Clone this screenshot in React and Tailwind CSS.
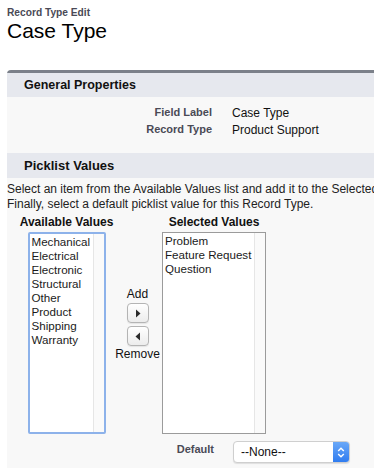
import React from 'react'

const available = ['Mechanical', 'Electrical', 'Electronic', 'Structural', 'Other', 'Product', 'Shipping', 'Warranty']
const selected = ['Problem', 'Feature Request', 'Question']

function ListBox({ items, focused, width }) {
  return (
    <div
      className={
        'relative h-[202px] bg-white ' +
        (focused ? 'border-2 border-[#8db2ea] rounded-[2px]' : 'border border-[#9b9b9b]')
      }
      style={{ width }}
    >
      <div className="absolute top-0 bottom-0 right-0 w-[11px] border-l border-[#e6e6e6] bg-[#fafafa]" />
      <div className="pl-[2px] pt-[1px] text-[11.6px] leading-[14px] text-[#1a1a1a] whitespace-nowrap">
        {items.map((it) => (
          <div key={it}>{it}</div>
        ))}
      </div>
    </div>
  )
}

function ArrowButton({ dir }) {
  return (
    <div className="w-[22px] h-[20px] rounded-[4px] border border-[#b4b4b4] bg-gradient-to-b from-white to-[#ececec] shadow-[0_1px_1px_rgba(0,0,0,0.08)] flex items-center justify-center">
      <svg width="6" height="9" viewBox="0 0 6 9">
        {dir === 'right' ? (
          <path d="M1 0.5 L5.5 4.5 L1 8.5 Z" fill="#2b2b2b" />
        ) : (
          <path d="M5 0.5 L0.5 4.5 L5 8.5 Z" fill="#2b2b2b" />
        )}
      </svg>
    </div>
  )
}

export default function App() {
  return (
    <div className="w-[374px] h-[468px] overflow-hidden bg-white" style={{ fontFamily: '"Liberation Sans", Arial, sans-serif' }}>
      {/* Title */}
      <div className="pl-[7px] pt-[7px]">
        <div className="text-[10.2px] font-bold text-[#4a4a56] leading-[12px]">Record Type Edit</div>
        <div className="text-[21px] leading-[23px] text-[#000]">Case Type</div>
      </div>

      {/* Panel */}
      <div className="ml-[7px] mt-[28px] w-[420px] border-t-[3px] border-[#7b8089] rounded-tl-[4px] bg-[#f8f8f8]">
        <div className="h-[24px] bg-[#e6e8ee] pl-[17px] flex items-center text-[12.5px] font-bold text-[#111]">
          General Properties
        </div>
        <div className="pt-[7px] pb-[13px] text-[12px]">
          <div className="flex items-center h-[17px]">
            <div className="w-[225px] pr-[20px] text-right text-[11px] font-bold text-[#4a4a56]">Field Label</div>
            <div className="text-[#111]">Case Type</div>
          </div>
          <div className="flex items-center h-[17px]">
            <div className="w-[225px] pr-[20px] text-right text-[11px] font-bold text-[#4a4a56]">Record Type</div>
            <div className="text-[#111]">Product Support</div>
          </div>
        </div>

        <div className="mt-[2px] h-[25px] bg-[#e6e8ee] pl-[17px] flex items-center text-[13px] font-bold text-[#111]">
          Picklist Values
        </div>
        <div className="pt-[4px] pb-[20px]">
          <div className="text-[12px] leading-[15px] text-[#222] whitespace-nowrap">
            <div>Select an item from the Available Values list and add it to the Selected Values list.</div>
            <div>Finally, select a default picklist value for this Record Type.</div>
          </div>

          <div className="mt-[3px] flex items-start">
            {/* Available */}
            <div className="ml-[17px] flex flex-col items-center w-[85px]">
              <div className="text-[12px] font-bold text-[#111] leading-[14px] whitespace-nowrap">Available Values</div>
              <div className="mt-[3px]">
                <ListBox items={available} focused width={78} />
              </div>
            </div>

            {/* Buttons */}
            <div className="w-[53px] pl-[4px] flex flex-col items-center pt-[72px] text-[12px] text-[#111]">
              <div className="leading-[14px]">Add</div>
              <div className="mt-[2px]"><ArrowButton dir="right" /></div>
              <div className="mt-[3px]"><ArrowButton dir="left" /></div>
              <div className="leading-[14px] mt-[1px]">Remove</div>
            </div>

            {/* Selected */}
            <div className="flex flex-col items-center w-[104px]">
              <div className="text-[12px] font-bold text-[#111] leading-[14px] whitespace-nowrap">Selected Values</div>
              <div className="mt-[3px]">
                <ListBox items={selected} width={104} />
              </div>
            </div>
          </div>

          {/* Default */}
          <div className="mt-[7px] flex items-center">
            <div className="w-[226px] text-right pr-[19px] text-[11px] font-bold text-[#4a4a56] -mt-[6px]">Default</div>
            <div className="w-[117px] h-[22px] rounded-[4px] border border-[#cfcfcf] bg-white shadow-[0_1px_1px_rgba(0,0,0,0.1)] flex items-center justify-between pl-[7px] pr-0 text-[12px] text-[#111]">
              <span>--None--</span>
              <div className="w-[16px] h-[20px] rounded-r-[3px] bg-gradient-to-b from-[#6aa8f7] to-[#2f7cf0] flex items-center justify-center">
                <svg width="8" height="11" viewBox="0 0 8 11">
                  <path d="M1.2 4 L4 1.2 L6.8 4" fill="none" stroke="#fff" strokeWidth="1.4" />
                  <path d="M1.2 7 L4 9.8 L6.8 7" fill="none" stroke="#fff" strokeWidth="1.4" />
                </svg>
              </div>
            </div>
          </div>
        </div>
      </div>
    </div>
  )
}
